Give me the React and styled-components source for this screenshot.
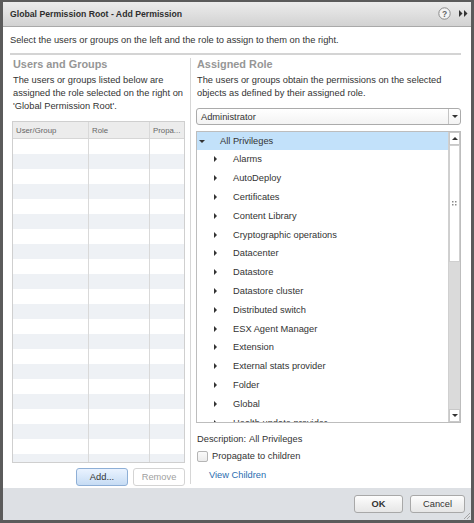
import React from "react";
import styled, { createGlobalStyle } from "styled-components";

const Global = createGlobalStyle`
  html, body { margin: 0; padding: 0; background: #fff; }
  body {
    font-family: "Liberation Sans", Arial, sans-serif;
    font-size: 9.3px;
    color: #333;
  }
  * { box-sizing: border-box; }
`;

const Window = styled.div`
  width: 474px;
  height: 523px;
  border: 3px solid #5b5b5b;
  border-top-width: 2px;
  display: flex;
  flex-direction: column;
  background: #fff;
  overflow: hidden;
`;

const TitleBar = styled.div`
  height: 25px;
  flex: none;
  display: flex;
  align-items: center;
  padding: 0 3px 1px 7px;
  background: linear-gradient(#ececec, #d2d2d2);
  border-bottom: 1px solid #a9a9a9;
`;

const Title = styled.div`
  flex: 1;
  font-weight: bold;
  font-size: 8.7px;
  color: #2e2e2e;
`;

const TitleIcons = styled.div`
  display: flex;
  align-items: center;
  gap: 8px;
`;

const Body = styled.div`
  flex: 1;
  display: flex;
  flex-direction: column;
  padding: 0 10px 0 6px;
  min-height: 0;
`;

const Intro = styled.div`
  padding: 7px 0 6px 1px;
  line-height: 13px;
`;

const Rule = styled.div`
  height: 2px;
  background: #d4d4d4;
  margin-left: 1px;
`;

const Columns = styled.div`
  flex: 1;
  display: grid;
  grid-template-columns: 176px 1px 265px;
  column-gap: 5px;
  min-height: 0;
`;

const Divider = styled.div`
  background: #d6d6d6;
  margin: 3px 0 4px;
`;

const Column = styled.div`
  display: flex;
  flex-direction: column;
  min-height: 0;
  padding-left: ${(p) => p.$inset || 0}px;
`;

const Heading = styled.div`
  font-weight: bold;
  font-size: 10.9px;
  color: #969696;
  padding: 2px 0 0 1px;
  line-height: 14px;
`;

const Para = styled.div`
  padding: 3px 0 0 1px;
  line-height: 13px;
`;

/* users / groups grid */
const Table = styled.div`
  margin-top: 8px;
  height: 342px;
  border: 1px solid #cfcfcf;
  display: flex;
  flex-direction: column;
  overflow: hidden;
`;

const TRow = styled.div`
  display: grid;
  grid-template-columns: 76px 61px 1fr;
  height: ${(p) => (p.$head ? "17px" : "15px")};
  flex: none;
  background: ${(p) => (p.$head ? "#ececec" : p.$alt ? "#eef1f5" : "#fff")};
  border-bottom: ${(p) => (p.$head ? "1px solid #d6d6d6" : "none")};
`;

const TCell = styled.div`
  border-right: 1px solid #d9d9d9;
  padding-left: 3px;
  display: flex;
  align-items: center;
  font-size: 7.8px;
  color: #666;
  white-space: nowrap;
  overflow: hidden;
  &:last-child { border-right: none; }
`;

const ButtonRow = styled.div`
  display: flex;
  justify-content: flex-end;
  gap: 5px;
  margin-top: 5px;
`;

const Btn = styled.button`
  height: 18px;
  width: ${(p) => p.$w}px;
  padding: 0;
  border-radius: 3px;
  font-family: inherit;
  font-size: 9.3px;
  font-weight: ${(p) => (p.$bold ? "bold" : "normal")};
  color: ${(p) => (p.$disabled ? "#a0a0a0" : "#333")};
  border: 1px solid
    ${(p) => (p.$primary ? "#8eafd6" : p.$disabled ? "#d4d4d4" : "#a8a8a8")};
  background: ${(p) =>
    p.$primary
      ? "linear-gradient(#eaf3ff, #c6dcf4)"
      : p.$disabled
      ? "#fff"
      : "linear-gradient(#fdfdfd, #e6e6e6)"};
`;

/* role selector */
const Select = styled.div`
  margin-top: 8px;
  height: 17px;
  border: 1px solid #ababab;
  border-radius: 3px;
  display: flex;
  background: linear-gradient(#fff, #f3f3f3);
`;

const SelectText = styled.div`
  flex: 1;
  display: flex;
  align-items: center;
  padding-left: 4px;
`;

const SelectArrow = styled.div`
  width: 12px;
  border-left: 1px solid #c4c4c4;
  display: flex;
  align-items: center;
  justify-content: center;
`;

const Tree = styled.div`
  margin-top: 6px;
  height: 292px;
  border: 1px solid #bdbdbd;
  display: flex;
  overflow: hidden;
`;

const TreeList = styled.div`
  flex: 1;
  overflow: hidden;
`;

const TreeRow = styled.div`
  height: ${(p) => (p.$top ? "18px" : "18.8px")};
  display: flex;
  align-items: center;
  padding-left: ${(p) => (p.$top ? "2px" : "17px")};
  background: ${(p) => (p.$sel ? "#c2e1fa" : "transparent")};
  white-space: nowrap;
`;

const Caret = styled.span`
  width: ${(p) => (p.$top ? "21px" : "19px")};
  display: flex;
  align-items: center;
`;

const Scrollbar = styled.div`
  width: 12px;
  flex: none;
  border-left: 1px solid #d0d0d0;
  display: flex;
  flex-direction: column;
`;

const ScrollBtn = styled.div`
  height: 13px;
  flex: none;
  border: 1px solid #c8c8c8;
  background: #fff;
  display: flex;
  align-items: center;
  justify-content: center;
`;

const Thumb = styled.div`
  height: 117px;
  flex: none;
  background: #fff;
  border: 1px solid #cfcfcf;
  display: flex;
  align-items: center;
  justify-content: center;
`;

const Track = styled.div`
  flex: 1;
  background: #dadada;
`;

const Info = styled.div`
  display: flex;
  gap: 3px;
  padding: 9px 0 0 1px;
  line-height: 14px;
`;

const CheckLine = styled.label`
  display: flex;
  align-items: center;
  gap: 4px;
  padding: 3px 0 0 1px;
  line-height: 14px;
`;

const Box = styled.span`
  width: 11px;
  height: 11px;
  border: 1px solid #b5b5b5;
  border-radius: 2px;
  background: linear-gradient(#fafafa, #ececec);
`;

const Link = styled.div`
  color: #2a6db0;
  padding: 5px 0 0 13px;
  line-height: 14px;
`;

const Footer = styled.div`
  height: 32px;
  flex: none;
  background: #dde0e4;
  display: flex;
  align-items: center;
  justify-content: flex-end;
  gap: 7px;
  padding: 0 6px 0 0;
  position: relative;
`;

const Grip = styled.svg`
  position: absolute;
  right: 0;
  bottom: 0;
`;

const Tri = ({ dir = "right", size = 4, color = "#333" }) => {
  const pts =
    dir === "right"
      ? `0,0 ${size},${size} 0,${size * 2}`
      : dir === "down"
      ? `0,0 ${size * 2},0 ${size},${size}`
      : `0,${size} ${size * 2},${size} ${size},0`;
  const w = dir === "right" ? size : size * 2;
  const h = dir === "right" ? size * 2 : size;
  return (
    <svg width={w} height={h} viewBox={`0 0 ${w} ${h}`}>
      <polygon points={pts} fill={color} />
    </svg>
  );
};

const HelpIcon = () => (
  <svg width="13" height="13" viewBox="0 0 13 13">
    <circle cx="6.5" cy="6.5" r="5.7" fill="#f4f4f4" stroke="#8a8a8a" />
    <text x="6.5" y="9.6" textAnchor="middle" fontSize="8.5" fontWeight="bold" fill="#666" fontFamily="Liberation Sans, Arial, sans-serif">?</text>
  </svg>
);

const Forward = () => (
  <svg width="9" height="7" viewBox="0 0 9 7">
    <polygon points="0,0 3.5,3.5 0,7" fill="#333" />
    <polygon points="5,0 8.5,3.5 5,7" fill="#333" />
  </svg>
);

const Dots = () => (
  <svg width="5" height="5" viewBox="0 0 5 5">
    {[0, 3].map((x) => [0, 3].map((y) => <rect key={`${x}${y}`} x={x} y={y} width="1.5" height="1.5" fill="#8a8a8a" />))}
  </svg>
);

const privileges = [
  "Alarms",
  "AutoDeploy",
  "Certificates",
  "Content Library",
  "Cryptographic operations",
  "Datacenter",
  "Datastore",
  "Datastore cluster",
  "Distributed switch",
  "ESX Agent Manager",
  "Extension",
  "External stats provider",
  "Folder",
  "Global",
  "Health update provider",
];

export default function App() {
  const rows = Array.from({ length: 22 }, (_, i) => i);
  return (
    <>
      <Global />
      <Window>
        <TitleBar>
          <Title>Global Permission Root - Add Permission</Title>
          <TitleIcons>
            <HelpIcon />
            <Forward />
          </TitleIcons>
        </TitleBar>
        <Body>
          <Intro>Select the users or groups on the left and the role to assign to them on the right.</Intro>
          <Rule />
          <Columns>
            <Column $inset={3}>
              <Heading>Users and Groups</Heading>
              <Para>
                The users or groups listed below are assigned the role selected on the right on
                'Global Permission Root'.
              </Para>
              <Table>
                <TRow $head>
                  <TCell>User/Group</TCell>
                  <TCell>Role</TCell>
                  <TCell>Propa...</TCell>
                </TRow>
                {rows.map((i) => (
                  <TRow key={i} $alt={i % 2 === 1}>
                    <TCell />
                    <TCell />
                    <TCell />
                  </TRow>
                ))}
              </Table>
              <ButtonRow>
                <Btn $w={52} $primary>Add...</Btn>
                <Btn $w={52} $disabled>Remove</Btn>
              </ButtonRow>
            </Column>
            <Divider />
            <Column>
              <Heading>Assigned Role</Heading>
              <Para>
                The users or groups obtain the permissions on the selected objects as defined by
                their assigned role.
              </Para>
              <Select>
                <SelectText>Administrator</SelectText>
                <SelectArrow>
                  <Tri dir="down" size={3} />
                </SelectArrow>
              </Select>
              <Tree>
                <TreeList>
                  <TreeRow $top $sel>
                    <Caret $top>
                      <Tri dir="down" size={3} />
                    </Caret>
                    All Privileges
                  </TreeRow>
                  {privileges.map((p) => (
                    <TreeRow key={p}>
                      <Caret>
                        <Tri dir="right" size={3} />
                      </Caret>
                      {p}
                    </TreeRow>
                  ))}
                </TreeList>
                <Scrollbar>
                  <ScrollBtn>
                    <Tri dir="up" size={3} />
                  </ScrollBtn>
                  <Thumb>
                    <Dots />
                  </Thumb>
                  <Track />
                  <ScrollBtn>
                    <Tri dir="down" size={3} />
                  </ScrollBtn>
                </Scrollbar>
              </Tree>
              <Info>
                <span>Description:</span>
                <span>All Privileges</span>
              </Info>
              <CheckLine>
                <Box />
                Propagate to children
              </CheckLine>
              <Link>View Children</Link>
            </Column>
          </Columns>
        </Body>
        <Footer>
          <Btn $w={49} $bold>OK</Btn>
          <Btn $w={55}>Cancel</Btn>
          <Grip width="10" height="10" viewBox="0 0 10 10">
            <path d="M9 3 L3 9 M9 6 L6 9" stroke="#a5a5a5" strokeWidth="1" />
          </Grip>
        </Footer>
      </Window>
    </>
  );
}
